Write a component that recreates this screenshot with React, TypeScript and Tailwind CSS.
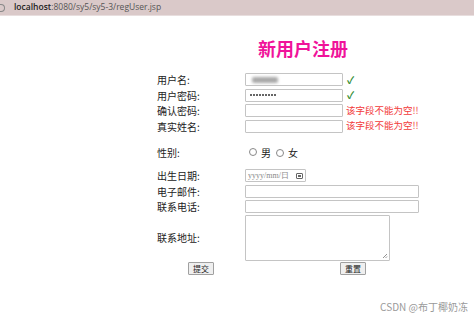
import React from "react";

const cjk = { fontFamily: '"Noto Sans CJK SC", "Noto Sans", sans-serif' };

function Label({ children }: { children: React.ReactNode }) {
  return <div className="w-[88px] shrink-0 text-[10px] text-[#222]">{children}</div>;
}

function Field({ w = "w-[98px]", children }: { w?: string; children?: React.ReactNode }) {
  return (
    <div className={`${w} h-[13px] border border-[#c4c4c4] rounded-[1px] bg-white flex items-center px-[3px] overflow-hidden`}>
      {children}
    </div>
  );
}

function Ok() {
  return <span className="ml-[4px] text-[10px] font-bold text-[#2e8b2e] leading-none">✓</span>;
}

function Err() {
  return <span className="ml-[3px] text-[9.5px] text-[#f23a3a] leading-none">该字段不能为空!!</span>;
}

function Radio() {
  return <span className="inline-block w-[8px] h-[8px] rounded-full border border-[#888] bg-white" />;
}

function Button({ children }: { children: React.ReactNode }) {
  return (
    <div className="h-[13px] px-[4px] flex items-center border border-[#a0a0a0] bg-[#efefef] rounded-[1px] text-[8px] text-[#222]">
      {children}
    </div>
  );
}

export default function App() {
  return (
    <div className="w-[474px] h-[319px] bg-white relative overflow-hidden" style={cjk}>
      <div className="h-[16px] bg-[#dac9c9] flex items-center border-b border-[#e8dede]">
        <span className="w-[5px] h-[8px] border border-[#888] rounded-r-full border-l-0 mr-[9px]" />
        <span className="text-[8.5px] text-[#555]" style={{ fontFamily: '"Open Sans", sans-serif' }}>
          <span className="text-[#222] font-semibold">localhost</span>:8080/sy5/sy5-3/regUser.jsp
        </span>
      </div>

      <div className="ml-[258px] mt-[21px] h-[22px] flex items-center text-[18px] font-bold text-[#f0139a] leading-none">
        新用户注册
      </div>

      <div className="ml-[157px] mt-[13px] flex flex-col">
        <div className="h-[15px] flex items-center">
          <Label>用户名:</Label>
          <Field>
            <span className="w-[26px] h-[6px] ml-[3px] rounded-[2px] bg-[#a8a8a8] blur-[1.5px]" />
          </Field>
          <Ok />
        </div>
        <div className="h-[16px] flex items-center">
          <Label>用户密码:</Label>
          <Field>
            <span className="flex gap-[1px] ml-[1px]">
              {Array.from({ length: 9 }).map((_, i) => (
                <span key={i} className="w-[2px] h-[2px] rounded-full bg-[#333]" />
              ))}
            </span>
          </Field>
          <Ok />
        </div>
        <div className="h-[15px] flex items-center">
          <Label>确认密码:</Label>
          <Field />
          <Err />
        </div>
        <div className="h-[16px] flex items-center">
          <Label>真实姓名:</Label>
          <Field />
          <Err />
        </div>

        <div className="h-[16px] mt-[10px] flex items-center">
          <Label>性别:</Label>
          <div className="flex items-center text-[10px] text-[#222] ml-[4px]">
            <Radio />
            <span className="ml-[4px]">男</span>
            <span className="ml-[5px]"><Radio /></span>
            <span className="ml-[4px]">女</span>
          </div>
        </div>

        <div className="h-[15px] mt-[8px] flex items-center">
          <Label>出生日期:</Label>
          <div className="w-[61px] h-[13px] border border-[#c4c4c4] rounded-[1px] flex items-center justify-between px-[2px]">
            <span className="text-[8px] text-[#888]" style={{ fontFamily: '"Liberation Serif", serif' }}>
              yyyy/mm/日
            </span>
            <span className="w-[7px] h-[6px] border border-[#666] rounded-[1px] flex items-center justify-center">
              <span className="w-[3px] h-[2px] bg-[#666]" />
            </span>
          </div>
        </div>
        <div className="h-[16px] flex items-center">
          <Label>电子邮件:</Label>
          <Field w="w-[174px]" />
        </div>
        <div className="h-[15px] flex items-center">
          <Label>联系电话:</Label>
          <Field w="w-[174px]" />
        </div>
        <div className="h-[47px] flex items-center">
          <Label>联系地址:</Label>
          <div className="w-[145px] h-[46px] border border-[#c4c4c4] rounded-[1px] relative">
            <svg className="absolute right-[1px] bottom-[1px]" width="6" height="6" viewBox="0 0 6 6">
              <path d="M1 5 L5 1 M3.5 5 L5 3.5" stroke="#777" strokeWidth="0.8" />
            </svg>
          </div>
        </div>
        <div className="h-[15px] flex items-center">
          <div className="ml-[31px]">
            <Button>提交</Button>
          </div>
          <div className="ml-[126px]">
            <Button>重置</Button>
          </div>
        </div>
      </div>

      <div className="absolute right-[6px] bottom-[5px] text-[10px] text-[#9a9a9a]">CSDN @布丁椰奶冻</div>
    </div>
  );
}
